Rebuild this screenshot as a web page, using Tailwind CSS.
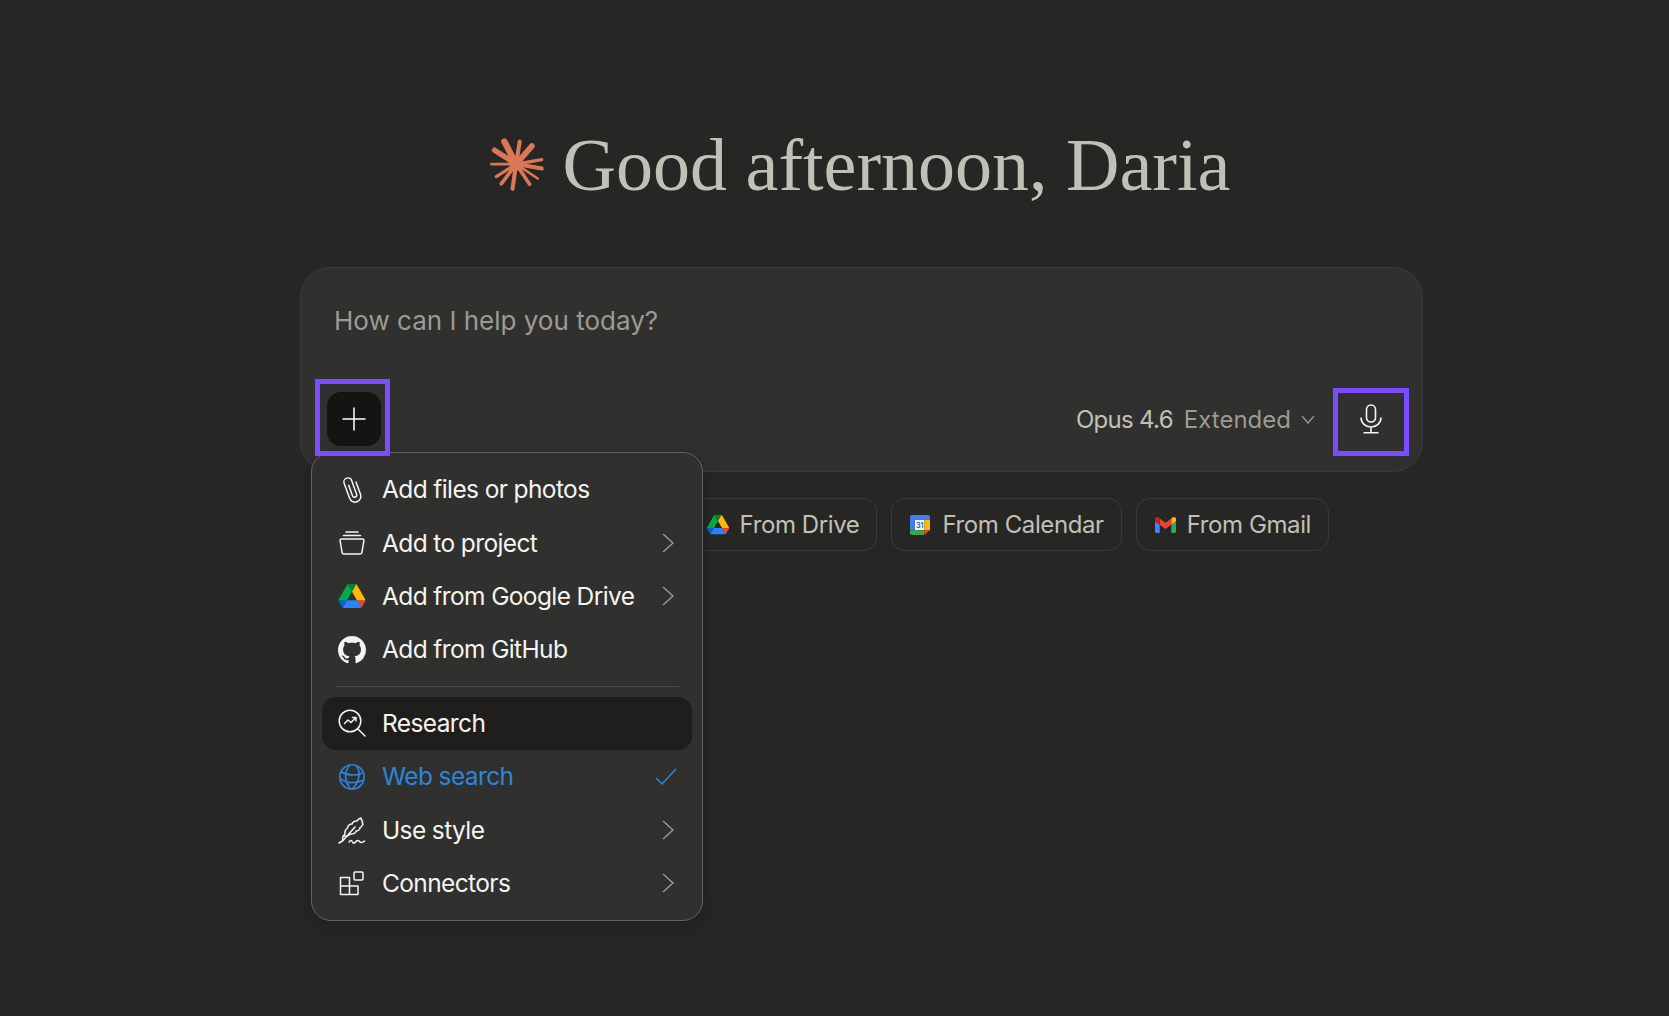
<!DOCTYPE html>
<html lang="en">
<head>
<meta charset="utf-8">
<title>Good afternoon</title>
<script src="https://cdn.jsdelivr.net/npm/@tailwindcss/browser@4"></script>
</head>
<body class="m-0 min-h-screen bg-[#262624] font-['Inter','Noto_Sans',sans-serif] overflow-hidden">
<main class="flex h-[1016px] flex-col items-center pl-[54px] pt-[122px]">
  <h1 class="flex h-[86px] items-center pr-[3px] text-[#c2c0b6]">
    <svg class="mr-[19px] h-[54px] w-[54px] shrink-0" viewBox="0 0 120 120" fill="none" stroke="#d97757" stroke-linecap="round">
      <circle cx="58" cy="58" r="15" fill="#d97757" stroke="none"/>
      <path d="M58 58 32 8" stroke-width="14"/><path d="M58 58 10 27" stroke-width="12"/>
      <path d="M58 58 66 8" stroke-width="9"/><path d="M58 58 93 18" stroke-width="13"/><path d="M58 58 115 48" stroke-width="7"/>
      <path d="M58 58 115 68" stroke-width="9"/><path d="M58 58 106 90" stroke-width="6"/><path d="M58 58 88 103" stroke-width="8"/>
      <path d="M58 58 50 113" stroke-width="9"/><path d="M58 58 25 102" stroke-width="8"/><path d="M58 58 14 86" stroke-width="7"/><path d="M58 58 3 58" stroke-width="6"/>
    </svg>
    <span class="font-['Liberation_Serif',serif] text-[74px] leading-[86px]">Good afternoon, Daria</span>
  </h1>

  <section class="relative mt-[59px] w-[1123px]">
    <div class="flex h-[205px] flex-col rounded-[30px] border border-[#3a3a37] bg-[#30302e] pb-[25px] pl-[26px] pr-[24px] pt-[36px]">
      <p class="pl-[7px] text-[26px] leading-[34px] text-[#9c9a92]">How can I help you today?</p>
      <div class="mt-auto flex items-center justify-between">
        <button class="flex h-[54px] w-[54px] items-center justify-center rounded-[14px] bg-[#141413]">
          <svg class="h-[26px] w-[26px]" viewBox="0 0 26 26" fill="none" stroke="#fff" stroke-width="1.5"><path d="M13 1.5v23M1.5 13h23"/></svg>
        </button>
        <div class="flex items-center">
          <span class="mt-[2px] text-[24px] leading-[32px] tracking-[-0.7px] text-[#c2c0b6]">Opus 4.6</span>
          <span class="ml-[11px] mt-[2px] text-[24px] leading-[32px] text-[#9c9a92]">Extended</span>
          <svg class="ml-[9px] h-[16px] w-[16px]" viewBox="0 0 16 16" fill="none" stroke="#9c9a92" stroke-width="1.2"><path d="M2 5l6 7 6-7"/></svg>
          <button class="ml-[28px] flex h-[54px] w-[54px] items-center justify-center">
            <svg class="h-[30px] w-[26px]" viewBox="0 0 26 30" fill="none" stroke="#f5f4ef" stroke-width="1.6"><rect x="8.5" y="1" width="9" height="17" rx="4.5"/><path d="M3 13.5c0 5.5 4.500 9.500 10 9.500s10-4 10-9.500M13 23v5.500M5.500 28.800h15"/></svg>
          </button>
        </div>
      </div>
    </div>

    <div class="mt-[26px] flex justify-end gap-[14px] pr-[94px] tracking-[-0.4px]">
      <div class="flex h-[53px] items-center rounded-[14px] border border-[#3a3a37] pl-[17px] pr-[17px] text-[24px] text-[#c2c0b6]">
        <svg class="mr-[11px] h-[21px] w-[22px]" viewBox="0 0 87.300 78"><path d="m6.600 66.850 3.850 6.650c.8 1.400 1.950 2.500 3.300 3.300l13.750-23.800h-27.500c0 1.550.4 3.100 1.200 4.500z" fill="#0066da"/><path d="m43.650 25-13.750-23.800c-1.350.8-2.500 1.900-3.300 3.300l-25.400 44a9.060 9.060 0 0 0 -1.200 4.500h27.500z" fill="#00ac47"/><path d="m73.550 76.800c1.350-.8 2.500-1.900 3.300-3.300l1.600-2.750 7.650-13.250c.8-1.400 1.200-2.950 1.200-4.500h-27.502l5.852 11.500z" fill="#ea4335"/><path d="m43.650 25 13.750-23.800c-1.350-.8-2.900-1.200-4.500-1.200h-18.500c-1.600 0-3.150.45-4.500 1.200z" fill="#00832d"/><path d="m59.800 53h-32.300l-13.750 23.800c1.350.8 2.900 1.200 4.500 1.200h50.800c1.600 0 3.150-.45 4.500-1.200z" fill="#2684fc"/><path d="m73.400 26.500-12.700-22c-.8-1.400-1.950-2.500-3.300-3.300l-13.750 23.800 16.150 28h27.450c0-1.550-.4-3.100-1.200-4.500z" fill="#ffba00"/></svg>
        From Drive
      </div>
      <div class="flex h-[53px] items-center rounded-[14px] border border-[#3a3a37] pl-[18px] pr-[17px] text-[24px] text-[#c2c0b6]">
        <svg class="mr-[12px] h-[20px] w-[20px]" viewBox="0 0 21 21"><path d="M5 5h10v11H5z" fill="#fff"/><path d="M2 0h17a2 2 0 0 1 2 2v3H5v11H0V2a2 2 0 0 1 2-2z" fill="#3f7fee"/><path d="M15 5h6v11h-6z" fill="#fbbc04"/><path d="M5 16h10v5H2a2 2 0 0 1-2-2v-3z" fill="#34a853"/><path d="M15 16h6l-6 5z" fill="#ea4335"/><text x="10" y="14" font-size="8" font-weight="700" text-anchor="middle" fill="#1a73e8" font-family="Inter">31</text></svg>
        From Calendar
      </div>
      <div class="flex h-[53px] items-center rounded-[14px] border border-[#3a3a37] pl-[18px] pr-[17px] text-[24px] text-[#c2c0b6]">
        <svg class="mr-[11px] h-[16px] w-[21px]" viewBox="52 42 88 66"><path fill="#4285f4" d="M58 108h14V74L52 59v43c0 3.320 2.690 6 6 6"/><path fill="#34a853" d="M120 108h14c3.320 0 6-2.690 6-6V59l-20 15"/><path fill="#fbbc04" d="M120 48v26l20-15v-8c0-7.420-8.470-11.650-14.400-7.200"/><path fill="#ea4335" d="M72 74V48l24 18 24-18v26L96 92"/><path fill="#c5221f" d="M52 51v8l20 15V48l-5.600-4.200c-5.940-4.450-14.400-.22-14.400 7.200"/></svg>
        From Gmail
      </div>
    </div>

    <!-- menu overlay -->
    <div class="absolute left-[11px] top-[185px] z-10 w-[392px] rounded-[20px] border border-[#64635e] bg-[#30302e] px-[10px] pb-[10px] pt-[10px] text-[24.5px] tracking-[-0.62px] text-[#f5f4ef] shadow-[0_4px_16px_rgba(0,0,0,0.2)]">
      <div class="flex h-[53.4px] items-center rounded-[14px] pl-[16px]">
        <svg class="h-[28px] w-[28px]" viewBox="0 0 28 28" fill="none" stroke="#f5f4ef" stroke-width="1.500" stroke-linecap="round"><g transform="rotate(-20 14 14)"><path d="M12.500 8.500V19.500a2.200 2.200 0 0 0 4.400 0V5a4 4 0 0 0-8 0V21a5.800 5.800 0 0 0 11.600 0V8"/></g></svg>
        <span class="ml-[16px]">Add files or photos</span>
      </div>
      <div class="flex h-[53.4px] items-center rounded-[14px] pl-[16px] pr-[17px]">
        <svg class="h-[28px] w-[28px]" viewBox="0 0 28 28" fill="none" stroke="#f5f4ef" stroke-width="1.500" stroke-linecap="round" stroke-linejoin="round"><path d="M8 3h12M5.500 6.500h17M3.500 10h21a1.400 1.400 0 0 1 1.400 1.600L24 23a2.200 2.200 0 0 1-2.200 2H6.200A2.200 2.200 0 0 1 4 23L2.100 11.600A1.400 1.400 0 0 1 3.500 10z"/></svg>
        <span class="ml-[16px]">Add to project</span>
        <svg class="ml-auto h-[22px] w-[14px]" viewBox="0 0 14 22" fill="none" stroke="#9c9a92" stroke-width="1.400"><path d="M2 2l10 9-10 9"/></svg>
      </div>
      <div class="flex h-[53.4px] items-center rounded-[14px] pl-[16px] pr-[17px]">
        <svg class="h-[24px] w-[28px]" viewBox="0 0 87.300 78"><path d="m6.600 66.850 3.850 6.650c.8 1.400 1.950 2.500 3.300 3.300l13.750-23.800h-27.500c0 1.550.4 3.100 1.200 4.500z" fill="#0066da"/><path d="m43.650 25-13.750-23.800c-1.350.8-2.500 1.900-3.300 3.300l-25.400 44a9.060 9.060 0 0 0 -1.200 4.500h27.500z" fill="#00ac47"/><path d="m73.550 76.800c1.350-.8 2.500-1.900 3.300-3.300l1.600-2.750 7.650-13.250c.8-1.400 1.200-2.950 1.200-4.500h-27.502l5.852 11.500z" fill="#ea4335"/><path d="m43.650 25 13.750-23.800c-1.350-.8-2.900-1.200-4.500-1.200h-18.500c-1.600 0-3.150.45-4.500 1.200z" fill="#00832d"/><path d="m59.800 53h-32.300l-13.750 23.800c1.350.8 2.900 1.200 4.500 1.200h50.800c1.600 0 3.150-.45 4.500-1.200z" fill="#2684fc"/><path d="m73.400 26.500-12.700-22c-.8-1.400-1.950-2.500-3.300-3.300l-13.750 23.800 16.150 28h27.450c0-1.550-.4-3.100-1.200-4.500z" fill="#ffba00"/></svg>
        <span class="ml-[16px]">Add from Google Drive</span>
        <svg class="ml-auto h-[22px] w-[14px]" viewBox="0 0 14 22" fill="none" stroke="#9c9a92" stroke-width="1.400"><path d="M2 2l10 9-10 9"/></svg>
      </div>
      <div class="flex h-[53.4px] items-center rounded-[14px] pl-[16px]">
        <svg class="h-[28px] w-[28px]" viewBox="0 0 16 16" fill="#f5f4ef"><path d="M8 0C3.580 0 0 3.580 0 8c0 3.540 2.290 6.530 5.470 7.590.4.07.55-.17.55-.38 0-.19-.01-.82-.01-1.490-2.010.37-2.530-.49-2.690-.94-.09-.23-.48-.94-.82-1.130-.28-.15-.68-.52-.01-.53.63-.01 1.080.58 1.230.82.72 1.210 1.870.87 2.330.66.07-.52.28-.87.51-1.070-1.780-.2-3.640-.89-3.640-3.950 0-.87.31-1.590.82-2.150-.08-.2-.36-1.020.08-2.120 0 0 .67-.21 2.200.82.64-.18 1.320-.27 2-.27.68 0 1.360.09 2 .27 1.530-1.040 2.200-.82 2.200-.82.44 1.100.16 1.920.08 2.120.51.56.82 1.270.82 2.150 0 3.070-1.870 3.750-3.650 3.950.29.25.54.73.54 1.480 0 1.070-.01 1.930-.01 2.200 0 .21.15.46.55.38A8.013 8.013 0 0016 8c0-4.420-3.580-8-8-8z"/></svg>
        <span class="ml-[16px]">Add from GitHub</span>
      </div>
      <div class="mx-[13px] mb-[9.5px] mt-[9.5px] h-px bg-[#4a4a46]"></div>
      <div class="flex h-[53.4px] items-center rounded-[14px] bg-[#1f1e1d] pl-[16px]">
        <svg class="h-[28px] w-[28px]" viewBox="0 0 28 28" fill="none" stroke="#f5f4ef" stroke-width="1.500" stroke-linecap="round" stroke-linejoin="round"><circle cx="12" cy="12" r="10.800"/><path d="M20 20l7 7"/><path d="M6.500 14.500l3.500-3.500 3 2.500 4.500-4.500M14.500 8.500h3.500v3.500"/></svg>
        <span class="ml-[16px]">Research</span>
      </div>
      <div class="flex h-[53.4px] items-center rounded-[14px] pl-[16px] pr-[15px] text-[#2c84db]">
        <svg class="h-[28px] w-[28px]" viewBox="0 0 28 28" fill="none" stroke="#2c84db" stroke-width="1.600"><circle cx="14" cy="14" r="12.200"/><path d="M3 8.500c5.500 4 15 4.500 21.500 1.500M2.200 15.500c6 5 15 5.500 23.600 1.500M12 2c-6 6-6 17 1 24M18 2.500c5 6 4 17-4 23.500"/></svg>
        <span class="ml-[16px]">Web search</span>
        <svg class="ml-auto h-[18px] w-[22px]" viewBox="0 0 22 18" fill="none" stroke="#2c84db" stroke-width="1.500"><path d="M1 10l6 6L21 1"/></svg>
      </div>
      <div class="flex h-[53.4px] items-center rounded-[14px] pl-[16px] pr-[17px]">
        <svg class="h-[28px] w-[28px]" viewBox="0 0 28 28" fill="none" stroke="#f5f4ef" stroke-width="1.500" stroke-linecap="round" stroke-linejoin="round"><path d="M1 27l4-2.500c-1-3 0-5 2-6.500-.5-2 .5-4.500 2.500-6C10 9 12.500 8 14 8c.5-2 3-3.500 5-3 .5-1 2-2.500 4-3 0 2 1 2 1.500 3-1 1 0 2 .5 3-1 1.500-1 3-3 3.500 0 2-2 3.500-4 3.500 0 2-3 3.500-5.500 3-2 2-4 2.500-6 2"/><path d="M5 24.500L17 11"/><path d="M11 26c1.500-2 2.500-2 3.500 0s2.500 1 3.500-.5 2.500-1.500 3.500 0 3 1.500 5-.5"/></svg>
        <span class="ml-[16px]">Use style</span>
        <svg class="ml-auto h-[22px] w-[14px]" viewBox="0 0 14 22" fill="none" stroke="#9c9a92" stroke-width="1.400"><path d="M2 2l10 9-10 9"/></svg>
      </div>
      <div class="flex h-[53.4px] items-center rounded-[14px] pl-[16px] pr-[17px]">
        <svg class="h-[28px] w-[28px]" viewBox="0 0 28 28" fill="none" stroke="#f5f4ef" stroke-width="1.500" stroke-linejoin="round"><path d="M2.500 8.500h9v17h-9zM2.500 17H20v8.500h-8.500"/><rect x="16" y="3" width="9" height="8" rx="1"/></svg>
        <span class="ml-[16px]">Connectors</span>
        <svg class="ml-auto h-[22px] w-[14px]" viewBox="0 0 14 22" fill="none" stroke="#9c9a92" stroke-width="1.400"><path d="M2 2l10 9-10 9"/></svg>
      </div>
    </div>

    <!-- annotation boxes -->
    <div class="pointer-events-none absolute left-[15px] top-[112px] z-20 h-[77px] w-[75px] border-[5px] border-[#7c4dff]"></div>
    <div class="pointer-events-none absolute left-[1033px] top-[121px] z-20 h-[68px] w-[76px] border-[5px] border-[#7c4dff]"></div>
  </section>
</main>
</body>
</html>
